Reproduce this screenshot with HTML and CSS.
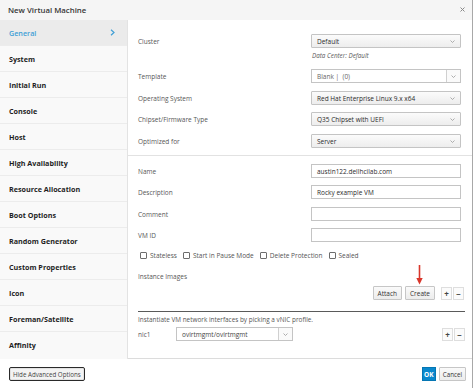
FILE: index.html
```html
<!DOCTYPE html>
<html>
<head>
<meta charset="utf-8">
<link rel="stylesheet" href="styles.css">
</head>
<body>
<div class="dialog">
  <header class="hdr">
    <span class="title">New Virtual Machine</span>
    <svg class="close" width="5" height="5" viewBox="0 0 5 5"><path d="M0.5 0.5L4.5 4.5M4.5 0.5L0.5 4.5" stroke="#8a8a8a" stroke-width="1"/></svg>
  </header>
  <div class="main">
    <nav class="nav">
      <div class="nav-item active"><span>General</span><svg width="5" height="7" viewBox="0 0 5 7"><path d="M1 0.8L4 3.5L1 6.2" fill="none" stroke="#3f9fd6" stroke-width="1.2"/></svg></div>
      <div class="nav-item">System</div>
      <div class="nav-item">Initial Run</div>
      <div class="nav-item">Console</div>
      <div class="nav-item">Host</div>
      <div class="nav-item">High Availability</div>
      <div class="nav-item">Resource Allocation</div>
      <div class="nav-item">Boot Options</div>
      <div class="nav-item">Random Generator</div>
      <div class="nav-item">Custom Properties</div>
      <div class="nav-item">Icon</div>
      <div class="nav-item">Foreman/Satellite</div>
      <div class="nav-item last">Affinity</div>
    </nav>
    <section class="content">
      <div class="sec1">
        <div class="row">
          <span class="lbl">Cluster</span>
          <div class="select"><span>Default</span><svg class="caret" width="5" height="3" viewBox="0 0 5 3"><path d="M0.5 0.5L2.5 2.5L4.5 0.5" fill="none" stroke="#999" stroke-width="0.8"/></svg></div>
        </div>
        <div class="hint">Data Center: Default</div>
        <div class="row mt8">
          <span class="lbl">Template</span>
          <div class="combo"><span class="combo-val">Blank |  (0)</span><span class="combo-btn"><svg width="5" height="3" viewBox="0 0 5 3"><path d="M0.5 0.5L2.5 2.5L4.5 0.5" fill="none" stroke="#999" stroke-width="0.8"/></svg></span></div>
        </div>
        <div class="row mt8">
          <span class="lbl">Operating System</span>
          <div class="select"><span>Red Hat Enterprise Linux 9.x x64</span><svg class="caret" width="5" height="3" viewBox="0 0 5 3"><path d="M0.5 0.5L2.5 2.5L4.5 0.5" fill="none" stroke="#999" stroke-width="0.8"/></svg></div>
        </div>
        <div class="row mt7">
          <span class="lbl">Chipset/Firmware Type</span>
          <div class="select"><span>Q35 Chipset with UEFI</span><svg class="caret" width="5" height="3" viewBox="0 0 5 3"><path d="M0.5 0.5L2.5 2.5L4.5 0.5" fill="none" stroke="#999" stroke-width="0.8"/></svg></div>
        </div>
        <div class="row mt8">
          <span class="lbl">Optimized for</span>
          <div class="select"><span>Server</span><svg class="caret" width="5" height="3" viewBox="0 0 5 3"><path d="M0.5 0.5L2.5 2.5L4.5 0.5" fill="none" stroke="#999" stroke-width="0.8"/></svg></div>
        </div>
      </div>
      <div class="sec2">
        <div class="row">
          <span class="lbl">Name</span>
          <div class="input">austin122.dellhcilab.com</div>
        </div>
        <div class="row mt7">
          <span class="lbl">Description</span>
          <div class="input">Rocky example VM</div>
        </div>
        <div class="row mt8">
          <span class="lbl">Comment</span>
          <div class="input"></div>
        </div>
        <div class="row mt7">
          <span class="lbl">VM ID</span>
          <div class="input"></div>
        </div>
        <div class="checks">
          <label class="chk"><span class="box"></span>Stateless</label>
          <label class="chk"><span class="box"></span>Start in Pause Mode</label>
          <label class="chk"><span class="box"></span>Delete Protection</label>
          <label class="chk"><span class="box"></span>Sealed</label>
        </div>
        <div class="sub-lbl">Instance Images</div>
        <div class="img-btns">
          <span class="btn">Attach</span>
          <span class="btn create">Create<svg class="arrow" width="7" height="20" viewBox="0 0 7 20"><path d="M3.5 0V14" stroke="#d9362b" stroke-width="1.6"/><path d="M0.3 13L3.5 19.5L6.7 13Z" fill="#d9362b"/></svg></span>
          <span class="pm"><span class="btn-sm">+</span><span class="btn-sm">&minus;</span></span>
        </div>
        <div class="dark-line"></div>
        <div class="note">Instantiate VM network interfaces by picking a vNIC profile.</div>
        <div class="nic-row">
          <span class="nic-lbl">nic1</span>
          <div class="combo nic"><span class="combo-val dark">ovirtmgmt/ovirtmgmt</span><span class="combo-btn"><svg width="5" height="3" viewBox="0 0 5 3"><path d="M0.5 0.5L2.5 2.5L4.5 0.5" fill="none" stroke="#999" stroke-width="0.8"/></svg></span></div>
          <span class="pm push"><span class="btn-sm">+</span><span class="btn-sm">&minus;</span></span>
        </div>
      </div>
    </section>
  </div>
  <footer class="ftr">
    <span class="btn-hide">Hide Advanced Options</span>
    <span class="ftr-right"><span class="btn-ok">OK</span><span class="btn cancel">Cancel</span></span>
  </footer>
</div>
</body>
</html>
```
FILE: styles.css
```css
* { box-sizing: border-box; }
html, body { margin: 0; padding: 0; }
body {
  width: 474px;
  height: 388px;
  overflow: hidden;
  background: #fff;
  font-family: "Open Sans", "DejaVu Sans", sans-serif;
  color: #333;
}
.dialog {
  width: 473px;
  height: 388px;
  border-right: 1px solid #a8a8a8;
  display: flex;
  flex-direction: column;
}
.hdr {
  height: 20px;
  flex: none;
  background: #f5f5f5;
  display: flex;
  align-items: center;
  justify-content: space-between;
  padding: 0 7px 0 8px;
}
.title { font-size: 7.8px; font-weight: 600; color: #363636; }
.close { margin-top: -1px; }
.main { display: flex; height: 339px; flex: none; }
.nav {
  width: 128px;
  flex: none;
  background: #f9f9f9;
  border-right: 1px solid #e3e3e3;
  display: flex;
  flex-direction: column;
}
.nav-item {
  height: 26px;
  flex: none;
  border-bottom: 1px solid #ececec;
  display: flex;
  align-items: center;
  justify-content: space-between;
  padding: 0 12px 0 9px;
  font-size: 7.2px;
  font-weight: 700;
  color: #1e1e1e;
}
.nav-item.last { border-bottom: none; }
.nav-item.active { background: #ebebeb; color: #3f9fd6; font-weight: 600; }
.content {
  flex: 1;
  border-bottom: 1px solid #dcdcdc;
  display: flex;
  flex-direction: column;
}
.sec1 { padding: 14px 10px 7px 10px; border-bottom: 1px solid #e2e2e2; }
.sec2 { padding: 8px 10px 0 10px; }
.row { display: flex; align-items: center; height: 14px; }
.mt7 { margin-top: 7px; }
.mt8 { margin-top: 8px; }
.lbl { width: 173px; flex: none; font-size: 6.5px; color: #575757; }
.select {
  width: 150px; height: 14px;
  border: 1px solid #c4c4c4;
  border-radius: 1px;
  background: linear-gradient(#fbfbfb, #ededed);
  display: flex; align-items: center; justify-content: space-between;
  padding: 0 5px 0 5px;
  font-size: 6.5px; color: #2b2b2b;
}
.caret { flex: none; }
.hint { margin: 3px 0 0 174px; height: 10px; line-height: 10px; font-size: 6.3px; font-style: italic; color: #5a5a5a; }
.combo {
  width: 150px; height: 14px;
  border: 1px solid #c4c4c4;
  background: #fff;
  display: flex; align-items: stretch;
}
.combo-val { flex: 1; display: flex; align-items: center; padding-left: 5px; font-size: 6.5px; color: #666; white-space: pre; }
.combo-val.dark { color: #444; }
.combo-btn { width: 14px; border-left: 1px solid #d0d0d0; display: flex; align-items: center; justify-content: center; background: #fafafa; }
.input {
  width: 150px; height: 14px;
  border: 1px solid #c4c4c4;
  background: #fff;
  display: flex; align-items: center;
  padding-left: 5px;
  font-size: 6.5px; color: #2b2b2b;
}
.checks { display: flex; align-items: center; gap: 6px; height: 10px; margin-top: 8px; padding-left: 2px; }
.chk { display: flex; align-items: center; font-size: 6.5px; color: #555; }
.box { width: 7px; height: 7px; border: 1px solid #6d6d6d; border-radius: 1px; background: #fff; margin-right: 3px; }
.sub-lbl { margin-top: 12px; height: 10px; line-height: 10px; font-size: 6.5px; color: #575757; }
.img-btns { display: flex; justify-content: flex-end; align-items: center; gap: 3px; height: 14px; margin-top: 4px; margin-right: -2px; }
.btn {
  height: 14px;
  border: 1px solid #c6c6c6;
  border-radius: 1px;
  background: linear-gradient(#fafafa, #ececec);
  display: flex; align-items: center;
  padding: 0 4px;
  font-size: 6.5px; color: #333;
}
.create { position: relative; }
.arrow { position: absolute; left: 10px; top: -22px; }
.pm { display: flex; gap: 1px; margin-left: 3px; }
.btn-sm {
  width: 11px; height: 13px;
  border: 1px solid #dedede;
  background: #fbfbfb;
  display: flex; align-items: center; justify-content: center;
  font-size: 8px; font-weight: 700; color: #444;
}
.dark-line { height: 1px; background: #5a5a5a; margin-top: 11px; margin-right: -3px; }
.note { margin-top: 3px; height: 10px; line-height: 10px; font-size: 6.4px; color: #555; }
.nic-row { display: flex; align-items: center; height: 14px; margin-top: 2px; margin-right: -3px; }
.nic-lbl { width: 38px; flex: none; font-size: 6.5px; color: #575757; }
.combo.nic { width: 117px; }
.push { margin-left: auto; }
.ftr {
  flex: 1;
  display: flex;
  justify-content: space-between;
  align-items: flex-start;
  padding: 8px 6px 0 9px;
}
.btn-hide {
  height: 14px;
  border: 1px solid #2a2a2a;
  border-radius: 2px;
  box-shadow: inset 0 0 0 1px #e2e2e2;
  background: #f3f3f3;
  display: flex; align-items: center;
  padding: 0 3px;
  font-size: 6.2px; color: #444;
}
.ftr-right { display: flex; gap: 3px; }
.btn-ok {
  width: 14px; height: 14px;
  background: #0a88cd;
  border: 1px solid #0576b3;
  display: flex; align-items: center; justify-content: center;
  font-size: 6.5px; font-weight: 700; color: #fff;
}
.cancel { padding: 0 3px; font-size: 6.2px; }
```
